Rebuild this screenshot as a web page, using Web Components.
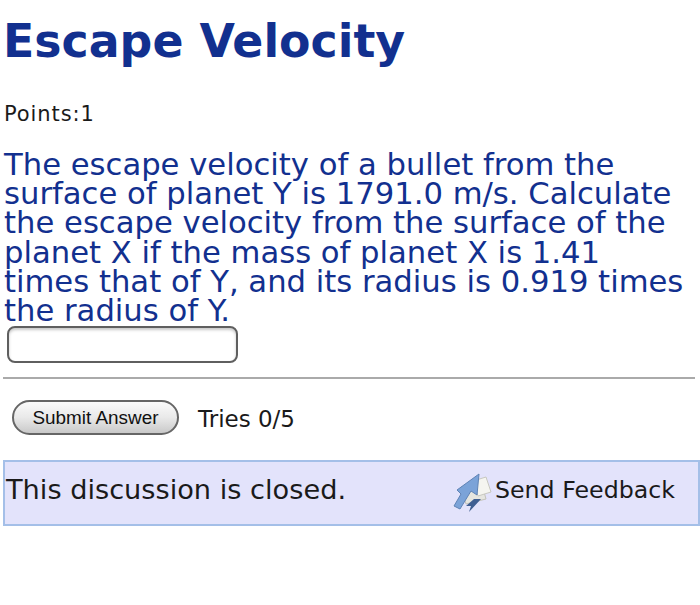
<!DOCTYPE html>
<html>
<head>
<meta charset="utf-8">
<title>Escape Velocity</title>
<style>
  html, body { margin: 0; padding: 0; background: #fff; }
  body { font-family: "DejaVu Sans", Verdana, sans-serif; overflow: hidden; }
</style>
</head>
<body>
<problem-page>
  <span slot="title">Escape Velocity</span>
  <span slot="points">Points:1</span>
  <span slot="question">The escape velocity of a bullet from the surface of planet Y is 1791.0 m/s. Calculate the escape velocity from the surface of the planet X if the mass of planet X is 1.41 times that of Y, and its radius is 0.919 times the radius of Y.</span>
  <answer-form tries="Tries 0/5"></answer-form>
  <closed-notice slot="notice"></closed-notice>
</problem-page>

<script>
class ProblemPage extends HTMLElement {
  constructor() {
    super();
    this.attachShadow({ mode: 'open' });
    this.shadowRoot.innerHTML = `
      <style>
        :host { display: block; width: 700px; height: 605px; padding: 15px 0 0 3px; box-sizing: border-box; }
        h1 { margin: 0; font-size: 45.8px; line-height: 52px; font-weight: bold; color: #12308f; white-space: nowrap; }
        .points { margin-top: 34px; padding-left: 1px; font-size: 21px; letter-spacing: .9px; line-height: 26px; color: #1a1a1a; }
        .question { margin-top: 23px; padding-left: 1px; width: 688px; font-size: 30.65px; line-height: 29.2px; color: #12308f; }
        .notice { display: block; margin-top: 25px; }
      </style>
      <h1><slot name="title"></slot></h1>
      <div class="points"><slot name="points"></slot></div>
      <div class="question"><slot name="question"></slot></div>
      <slot></slot>
      <div class="notice"><slot name="notice"></slot></div>
    `;
  }
}

class AnswerForm extends HTMLElement {
  constructor() {
    super();
    this.attachShadow({ mode: 'open' });
    this.shadowRoot.innerHTML = `
      <style>
        :host { display: block; }
        .field {
          display: block; box-sizing: border-box; width: 231px; height: 37px; margin: 1px 0 0 4px;
          border: 2px solid #5f5f5f; border-radius: 8px; background: #fff;
          box-shadow: inset 0 2px 3px rgba(0, 0, 0, .22);
        }
        hr { height: 2px; margin: 14px 5px 0 0; border: 0; background: #aaa; }
        .row { display: flex; align-items: center; gap: 19px; margin: 21px 0 0 9px; }
        button {
          box-sizing: border-box; width: 167px; height: 35px; padding: 0;
          border: 2px solid #666; border-radius: 18px;
          background: linear-gradient(#fbfbfb, #e9e9e9 50%, #c9c9c9);
          font-family: "Liberation Sans", Arial, sans-serif; font-size: 18.9px; color: #111;
        }
        .tries { font-size: 23px; color: #1a1a1a; margin-top: 2px; }
      </style>
      <div class="field"></div>
      <hr>
      <div class="row">
        <button type="button">Submit Answer</button>
        <span class="tries">${this.getAttribute('tries')}</span>
      </div>
    `;
  }
}

class ClosedNotice extends HTMLElement {
  constructor() {
    super();
    this.attachShadow({ mode: 'open' });
    this.shadowRoot.innerHTML = `
      <style>
        :host {
          display: flex; align-items: center; justify-content: space-between; box-sizing: border-box;
          width: 697px; height: 66px; padding: 0 23px 0 1px;
          background: #e3e3fb; border: 2px solid #a4bfe8; color: #1a1a1a;
        }
        .msg { font-size: 27.2px; margin-top: -8px; white-space: nowrap; }
        .send { display: flex; align-items: center; gap: 3px; font-size: 23.7px; white-space: nowrap; }
        .send span { margin-top: -6px; }
        svg { width: 39px; height: 40px; flex: none; margin-top: -1px; }
      </style>
      <span class="msg">This discussion is closed.</span>
      <span class="send">
        <svg viewBox="0 0 39 40">
          <path d="M8 14 L28 8 L33 26 L13 31 Z" fill="#e6e6e0" stroke="#c2c2ba"/>
          <path d="M20 8 L33 4 L38 19 L25 23 Z" fill="#f5f5f0" stroke="#c8c8c0"/>
          <path d="M28 26 L16 39 L18 33 L13 33 L21 26 Z" fill="#3f5f92"/>
          <path d="M1 33 L8 21 L4 17 L26 1 L24 22 L18 18 L7 36 Z" fill="#7ba3d8" stroke="#5f83b5"/>
        </svg>
        <span>Send Feedback</span>
      </span>
    `;
  }
}

customElements.define('problem-page', ProblemPage);
customElements.define('answer-form', AnswerForm);
customElements.define('closed-notice', ClosedNotice);
</script>
</body>
</html>
